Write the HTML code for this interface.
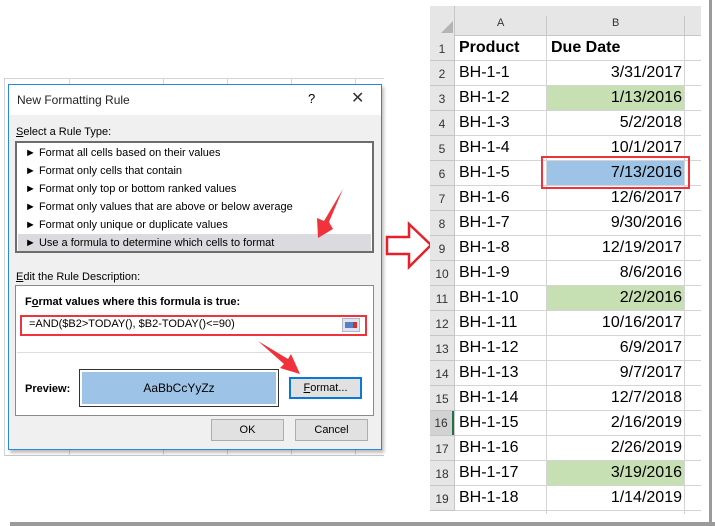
<!DOCTYPE html>
<html><head><style>
*{margin:0;padding:0;box-sizing:border-box}
body{width:715px;height:526px;position:relative;background:#fff;font-family:"Liberation Sans",sans-serif;overflow:hidden}
.a{position:absolute}
.t{position:absolute;font-size:11px;color:#000;white-space:nowrap}
.ss{font-size:16px}
</style></head><body>
<!-- background grid behind dialog -->
<div class="a" style="left:4px;top:78px;width:380px;height:378px;background:#fff;border-top:1px solid #d4d4d4;border-left:1px solid #d4d4d4;border-bottom:1px solid #c8c8c8"></div>
<div class="a" style="left:69px;top:78px;width:1px;height:378px;background:#d4d4d4"></div>
<div class="a" style="left:163px;top:78px;width:1px;height:378px;background:#d4d4d4"></div>
<div class="a" style="left:227px;top:78px;width:1px;height:378px;background:#d4d4d4"></div>
<div class="a" style="left:291px;top:78px;width:1px;height:378px;background:#d4d4d4"></div>
<div class="a" style="left:355px;top:78px;width:1px;height:378px;background:#d4d4d4"></div>
<!-- dialog -->
<div class="a" style="left:8px;top:84px;width:374px;height:366px;background:#f0f0f0;border:1px solid #2b87d8;box-shadow:2px 3px 3px rgba(0,0,0,0.25)"></div>
<div class="a" style="left:9px;top:85px;width:372px;height:30px;background:#fff"></div>
<div class="t" style="left:17px;top:93px;font-size:12px;color:#222">New Formatting Rule</div>
<div class="t" style="left:308px;top:91px;font-size:13px">?</div>
<div class="t" style="left:351px;top:88px;font-size:16px;color:#333">✕</div>
<div class="t" style="left:16px;top:126px"><u>S</u>elect a Rule Type:</div>
<div class="a" style="left:15px;top:141px;width:359px;height:112px;background:#fff;border:2px solid #6d6d6d"></div>
<div class="a" style="left:18px;top:234px;width:353px;height:17px;background:#dadadf"></div>
<div class="t" style="left:25px;top:147px">► Format all cells based on their values</div>
<div class="t" style="left:25px;top:165px">► Format only cells that contain</div>
<div class="t" style="left:25px;top:183px">► Format only top or bottom ranked values</div>
<div class="t" style="left:25px;top:201px">► Format only values that are above or below average</div>
<div class="t" style="left:25px;top:219px">► Format only unique or duplicate values</div>
<div class="t" style="left:25px;top:237px">► Use a formula to determine which cells to format</div>
<div class="t" style="left:16px;top:271px"><u>E</u>dit the Rule Description:</div>
<div class="a" style="left:15px;top:285px;width:359px;height:131px;background:#fff;border:1px solid #8a8a8a"></div>
<div class="t" style="left:25px;top:296px;font-weight:bold">F<u>o</u>rmat values where this formula is true:</div>
<div class="a" style="left:20px;top:315px;width:347px;height:21px;border:2px solid #f0323c"></div>
<div class="t" style="left:29px;top:318px">=AND($B2&gt;TODAY(), $B2-TODAY()&lt;=90)</div>
<div class="a" style="left:342px;top:318px;width:18px;height:14px;background:#dde6f0;border:1px solid #b0b8c8"><div style="margin:3px 2px;height:6px;background:#5b7fc6;border-right:4px solid #d03030"></div></div>
<div class="a" style="left:17px;top:352px;width:355px;height:1px;background:#ddd"></div>
<div class="t" style="left:25px;top:383px;font-weight:bold">Preview:</div>
<div class="a" style="left:79px;top:369px;width:200px;height:38px;border:1px solid #333;background:#fff;padding:2px"><div style="width:100%;height:100%;background:#9dc3e6;text-align:center;line-height:32px;font-size:12px">AaBbCcYyZz</div></div>
<div class="a" style="left:289px;top:377px;width:73px;height:22px;border:2px solid #0a78d7;background:#e1e1e1;text-align:center;line-height:18px;font-size:11px"><u>F</u>ormat...</div>
<div class="a" style="left:211px;top:419px;width:73px;height:22px;border:1px solid #adadad;background:#e1e1e1;text-align:center;line-height:20px;font-size:11px">OK</div>
<div class="a" style="left:295px;top:419px;width:73px;height:22px;border:1px solid #adadad;background:#e1e1e1;text-align:center;line-height:20px;font-size:11px">Cancel</div>
<!-- red pointers -->
<svg class="a" style="left:0;top:0" width="715" height="526">
<path d="M343,189 L329,222 L333,229 L318,238 L317,218 L324,221 Z" fill="#f0323c"/>
<path d="M258,341 L288,359 L291,354 L300,374 L280,368 L284,364 Z" fill="#f0323c"/>
<path d="M387,237 L409,237 L409,224 L431,245 L409,267 L409,254 L387,254 Z" fill="#fff" stroke="#e8202a" stroke-width="2.5"/>
</svg>
<!-- spreadsheet -->
<div class="a" style="left:430px;top:6px;width:271px;height:30px;background:#e6e6e6;border-bottom:1px solid #c6c6c6"></div>
<div class="a" style="left:430px;top:6px;width:25px;height:505px;background:#e6e6e6;border-right:1px solid #c6c6c6"></div>
<svg class="a" style="left:440px;top:20px" width="14" height="14"><path d="M13,1 L13,13 L1,13Z" fill="#b4b4b4"/></svg>
<div class="t" style="left:497px;top:17px;font-size:11px;color:#333">A</div>
<div class="t" style="left:612px;top:17px;font-size:11px;color:#333">B</div>
<div class="a" style="left:546px;top:16px;width:1px;height:20px;background:#c6c6c6"></div>
<div class="a" style="left:684px;top:16px;width:1px;height:20px;background:#c6c6c6"></div>
<div id="g"></div>
<div class="a" style="left:546px;top:36px;width:1px;height:478px;background:#d4d4d4"></div>
<div class="a" style="left:684px;top:36px;width:1px;height:478px;background:#d4d4d4"></div>
<div class="a" style="left:10px;top:522px;width:705px;height:4px;background:#9a9a9a"></div>
<div class="a" style="left:709px;top:0;width:3px;height:525px;background:#9a9a9a"></div>
<script>
var rows=[["Product","Due Date"],["BH-1-1","3/31/2017"],["BH-1-2","1/13/2016","g"],["BH-1-3","5/2/2018"],["BH-1-4","10/1/2017"],["BH-1-5","7/13/2016","b"],["BH-1-6","12/6/2017"],["BH-1-7","9/30/2016"],["BH-1-8","12/19/2017"],["BH-1-9","8/6/2016"],["BH-1-10","2/2/2016","g"],["BH-1-11","10/16/2017"],["BH-1-12","6/9/2017"],["BH-1-13","9/7/2017"],["BH-1-14","12/7/2018"],["BH-1-15","2/16/2019"],["BH-1-16","2/26/2019"],["BH-1-17","3/19/2016","g"],["BH-1-18","1/14/2019"]];
var h="";
for(var i=0;i<rows.length;i++){var y=36+i*25,r=rows[i];
if(r[2])h+='<div class="a" style="left:547px;top:'+y+'px;width:137px;height:24px;background:'+(r[2]=="g"?"#c6e0b4":"#9dc3e6")+'"></div>';
h+='<div class="a" style="left:455px;top:'+(y+24)+'px;width:246px;height:1px;background:#d4d4d4"></div>';
h+='<div class="a" style="left:430px;top:'+(y+24)+'px;width:25px;height:1px;background:#c6c6c6"></div>';
h+='<div class="t" style="left:430px;width:24px;text-align:center;top:'+(y+6)+'px;font-size:12px;color:#333'+(i==15?';background:#d2d2d2;height:24px;top:'+y+'px;line-height:24px;border-right:2px solid #217346':'')+'">'+(i+1)+'</div>';
h+='<div class="t ss" style="left:459px;top:'+(y+3)+'px;'+(i==0?'font-weight:bold':'')+'">'+r[0]+'</div>';
h+='<div class="t ss" style="'+(i==0?'left:551px;font-weight:bold':'right:33px')+';top:'+(y+3)+'px">'+r[1]+'</div>';}
document.getElementById("g").innerHTML=h;
</script>
<div class="a" style="left:541px;top:156px;width:149px;height:33px;border:2px solid #f0323c"></div>
</body></html>
